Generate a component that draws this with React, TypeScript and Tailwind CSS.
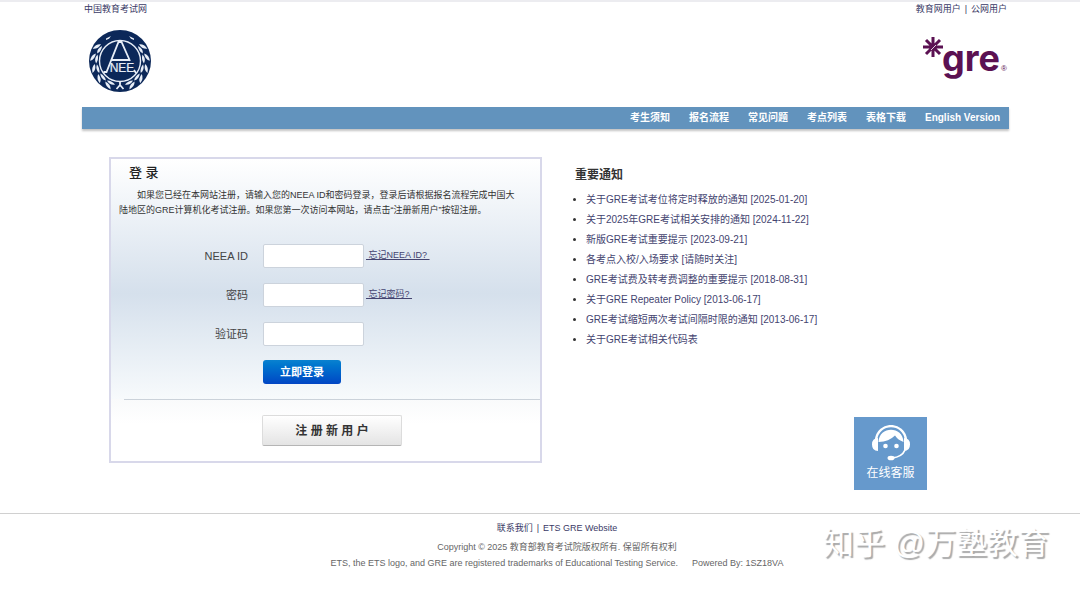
import React from 'react';

const navLinks = ['考生须知', '报名流程', '常见问题', '考点列表', '表格下载', 'English Version'];

const notices = [
  '关于GRE考试考位将定时释放的通知 [2025-01-20]',
  '关于2025年GRE考试相关安排的通知 [2024-11-22]',
  '新版GRE考试重要提示 [2023-09-21]',
  '各考点入校/入场要求 [请随时关注]',
  'GRE考试费及转考费调整的重要提示 [2018-08-31]',
  '关于GRE Repeater Policy [2013-06-17]',
  'GRE考试缩短两次考试间隔时限的通知 [2013-06-17]',
  '关于GRE考试相关代码表',
];

const fields = [
  { id: 'neea-id', label: 'NEEA ID', type: 'text', help: '忘记NEEA ID?' },
  { id: 'password', label: '密码', type: 'password', help: '忘记密码?' },
  { id: 'captcha', label: '验证码', type: 'text', help: '' },
];

// leaf positions on the left half of the wreath, mirrored for the right
const leafAngles = [204, 228, 252, 276, 300];

function Wreath() {
  return (
    <g fill="#e8eef7">
      {leafAngles.map((angle) => (
        <g key={angle} transform={`rotate(${angle} 31 31)`}>
          <path d="M26 7.5 Q30 4.5 35 8 Q30 10 26 7.5Z" />
          <path d="M28 1.2 Q34 1.5 36 6.2 Q30 6 28 1.2Z" />
        </g>
      ))}
      <path d="M17 8.5 L22 6 L20 8.8 L17 10Z" />
    </g>
  );
}

function NeeaLogo() {
  return (
    <svg viewBox="0 0 62 62" className="size-[62px]" role="img" aria-label="NEEA">
      <circle cx="31" cy="31" r="31" fill="#0c2859" />
      <Wreath />
      <g transform="translate(62 0) scale(-1 1)">
        <Wreath />
      </g>
      <circle cx="31" cy="31" r="20.5" fill="#0c2859" stroke="#e8eef7" strokeWidth="1.4" />
      <path
        d="M14.5 42 H17.5 L29.5 12 H32.5 L41 31 M22 30 H40.5 M45 40 L47 43 M31 52 V55 L27.5 59 M31 55 L34.5 59"
        fill="none"
        stroke="#e8eef7"
        strokeWidth="1.8"
      />
      <text
        x="33"
        y="42"
        textAnchor="middle"
        fontFamily="Liberation Sans, sans-serif"
        fontSize="12"
        fill="#e8eef7"
        stroke="#e8eef7"
        strokeWidth="0.2"
      >
        NEE
      </text>
    </svg>
  );
}

function GreLogo() {
  return (
    <svg viewBox="0 0 88 48" className="h-12 w-[88px]" role="img" aria-label="GRE">
      <path
        d="M12 2 V22 M2 12 H22 M5 5 L19 19 M19 5 L5 19"
        stroke="#5b1152"
        strokeWidth="3"
      />
      <path d="M10 15 L15 10" stroke="#fff" strokeWidth="0.8" />
      <text x="21" y="36" fontFamily="Inter, sans-serif" fontWeight="700" fontSize="36" fill="#5b1152">
        gre
      </text>
      <text x="80" y="36" fontFamily="Liberation Sans, sans-serif" fontSize="8" fill="#5b1152">
        ®
      </text>
    </svg>
  );
}

function HeadsetIcon() {
  return (
    <svg viewBox="0 0 40 36" className="h-9 w-10" aria-hidden="true">
      <path d="M5 15 C7 -3.5 33 -3.5 35 15" fill="none" stroke="#fff" strokeWidth="2.4" />
      <path d="M7.5 17 C8 0.5 32 0.5 32.5 17 Q27 15 24 10.5 Q18 16.5 7.5 17Z" fill="#fff" />
      <path d="M7 13 V26 Q1 26 1 19.5 Q1 13 7 13Z M33 13 V26 Q39 26 39 19.5 Q39 13 33 13Z" fill="#fff" />
      <circle cx="14.5" cy="21" r="2.3" fill="#fff" />
      <circle cx="25.5" cy="21" r="2.3" fill="#fff" />
      <path d="M34 25 Q31 32 21 33" fill="none" stroke="#fff" strokeWidth="1.8" />
      <ellipse cx="20" cy="33" rx="3.5" ry="2.3" fill="#fff" />
    </svg>
  );
}

function LoginPanel() {
  return (
    <section className="w-[433px] shrink-0 border-2 border-[#d8d8ea]">
      <div className="bg-linear-to-b from-white via-[#d5e0ec] via-56% to-[#f7fafc]">
        <h2 className="pt-1 pl-[18px] text-[13px] leading-5 font-medium text-[#222]">登 录</h2>
        <p className="mt-[5px] pr-5 pl-2 indent-[18px] text-[9px] leading-[15px] text-[#333]">
          如果您已经在本网站注册，请输入您的NEEA ID和密码登录，登录后请根据报名流程完成中国大陆地区的GRE计算机化考试注册。如果您第一次访问本网站，请点击“注册新用户”按钮注册。
        </p>

        <form className="mt-[26px] pb-[15px]" onSubmit={(e) => e.preventDefault()}>
          <div className="flex flex-col gap-[15px]">
            {fields.map((field) => (
              <div key={field.id} className="flex h-6 items-center">
                <label htmlFor={field.id} className="w-[137px] text-right text-[11px] text-[#444]">
                  {field.label}
                </label>
                <input
                  id={field.id}
                  type={field.type}
                  className="ml-[15px] h-6 w-[101px] rounded-xs border border-[#ccd3dc] bg-white px-1 text-[11px]"
                />
                {field.help && (
                  <a href="#" className="ml-[2px] text-[9px] whitespace-pre text-[#444470] underline">
                    {` ${field.help} `}
                  </a>
                )}
              </div>
            ))}
          </div>
          <button
            type="submit"
            className="mt-[14px] ml-[152px] block h-6 w-[78px] rounded-[3px] bg-linear-to-b from-[#0a82d0] to-[#0245c4] text-[11px] font-bold text-white"
          >
            立即登录
          </button>
        </form>
      </div>

      <div className="bg-linear-to-b from-[#f9fafb] to-white to-40% pb-[15px] pl-[13px]">
        <div className="border-t border-[#cbd2da] pt-[15px]">
          <button
            type="button"
            className="ml-[138px] block h-[31px] w-[140px] rounded-xs border border-[#dcdcdc] border-b-[#b5b5b5] bg-linear-to-b from-white to-[#e4e4e4] text-[12px] font-bold text-[#333]"
          >
            注 册 新 用 户
          </button>
        </div>
      </div>
    </section>
  );
}

export default function App() {
  return (
    <div className="relative min-h-screen overflow-hidden border-t-2 border-[#ececf0] bg-white font-['Liberation_Sans','Noto_Sans_CJK_SC',sans-serif] text-[#333]">
      <div className="pr-[71px] pl-[82px]">
        <header>
          <div className="flex justify-between px-[2px] text-[9px] leading-[14px] text-[#3a3a66]">
            <a href="#">中国教育考试网</a>
            <div className="flex gap-1">
              <a href="#">教育网用户</a>
              <span>|</span>
              <a href="#">公网用户</a>
            </div>
          </div>
          <div className="flex items-start justify-between pt-[14px] pl-[7px]">
            <NeeaLogo />
            <div className="pt-[5px]">
              <GreLogo />
            </div>
          </div>
          <nav className="mt-[15px] flex h-[22px] items-center justify-end gap-[19px] bg-[#6293bd] pr-[9px] pb-[2px] text-[10px] font-bold text-white shadow-[0_2px_2px_#c4c4c4]">
            {navLinks.map((link) => (
              <a key={link} href="#">
                {link}
              </a>
            ))}
          </nav>
        </header>

        <main className="flex pt-7 pl-[27px]">
          <LoginPanel />
          <section className="pt-2 pl-[33px]">
            <h2 className="text-[12px] leading-5 font-bold">重要通知</h2>
            <ul className="mt-[5px] list-disc pl-[11px] text-[10px] leading-5 marker:text-[#333]">
              {notices.map((notice) => (
                <li key={notice}>
                  <a href="#" className="text-[#444470]">
                    {notice}
                  </a>
                </li>
              ))}
            </ul>
          </section>
        </main>
      </div>

      <footer className="mt-[50px] border-t border-[#d0d0d0] pt-[6px] pl-[34px] text-center text-[9px] leading-4 text-[#666]">
        <div className="text-[#3a3a66]">
          <a href="#">联系我们</a>
          <span className="px-1">|</span>
          <a href="#">ETS GRE Website</a>
        </div>
        <p className="mt-[3px]">Copyright © 2025 教育部教育考试院版权所有. 保留所有权利</p>
        <p>
          ETS, the ETS logo, and GRE are registered trademarks of Educational Testing Service.
          <span className="pl-[14px]">Powered By: 1SZ18VA</span>
        </p>
      </footer>

      <button
        type="button"
        className="absolute top-[415px] right-[153px] flex size-[73px] flex-col items-center bg-[#6699cc] pt-2 text-[12px] leading-6 text-white"
      >
        <HeadsetIcon />
        在线客服
      </button>

      <div className="absolute top-[519px] right-[31px] text-[31px] leading-[46px] text-white [text-shadow:2px_2px_1px_#aaa]">
        知乎 @万塾教育
      </div>
    </div>
  );
}
